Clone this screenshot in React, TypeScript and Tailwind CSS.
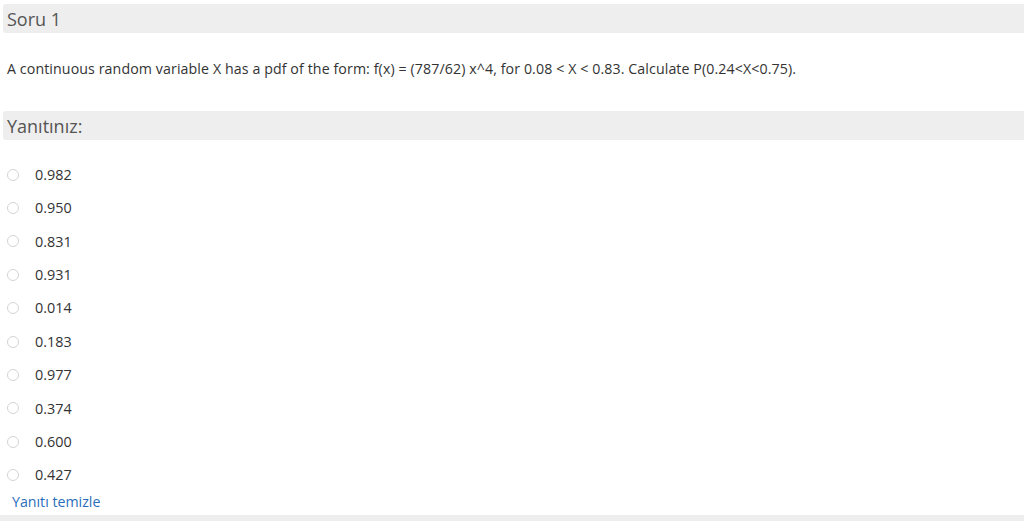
const options = [
  "0.982",
  "0.950",
  "0.831",
  "0.931",
  "0.014",
  "0.183",
  "0.977",
  "0.374",
  "0.600",
  "0.427",
];

export default function App() {
  return (
    <div
      className="w-[1024px] h-[521px] overflow-hidden bg-white text-[#333]"
      style={{ fontFamily: '"Open Sans", "Liberation Sans", sans-serif' }}
    >
      {/* Question header */}
      <div className="pt-[4px] pl-[3px]">
        <div className="h-[29px] bg-[#eeeeee] rounded-l-[3px] flex items-center pl-[4px]">
          <span className="text-[18px] text-[#555] leading-none">Soru 1</span>
        </div>
      </div>

      <p className="mt-[26px] pl-[7px] text-[14.2px] tracking-[0.1px] leading-[20px]">
        A continuous random variable X has a pdf of the form: f(x) = (787/62) x^4, for 0.08 &lt; X &lt; 0.83. Calculate P(0.24&lt;X&lt;0.75).
      </p>

      {/* Answer header */}
      <div className="mt-[32px] pl-[3px]">
        <div className="h-[29px] bg-[#eeeeee] rounded-l-[3px] flex items-center pl-[4px]">
          <span className="text-[18px] text-[#555] leading-none">Yanıtınız:</span>
        </div>
      </div>

      <div className="mt-[18px] flex flex-col">
        {options.map((o) => (
          <label key={o} className="h-[33.4px] flex items-center">
            <span className="ml-[7px] w-[12px] h-[12px] rounded-full border border-[#d4d4d4] bg-white" />
            <span className="ml-[16px] text-[14.4px] text-[#333]">{o}</span>
          </label>
        ))}
      </div>

      <div className="pl-[12px] mt-[0px] text-[14.2px] text-[#2a6ebb] leading-[20px]">
        Yanıtı temizle
      </div>

      <div className="mt-[3px] h-[8px] bg-[#eeeeee]" />
    </div>
  );
}
